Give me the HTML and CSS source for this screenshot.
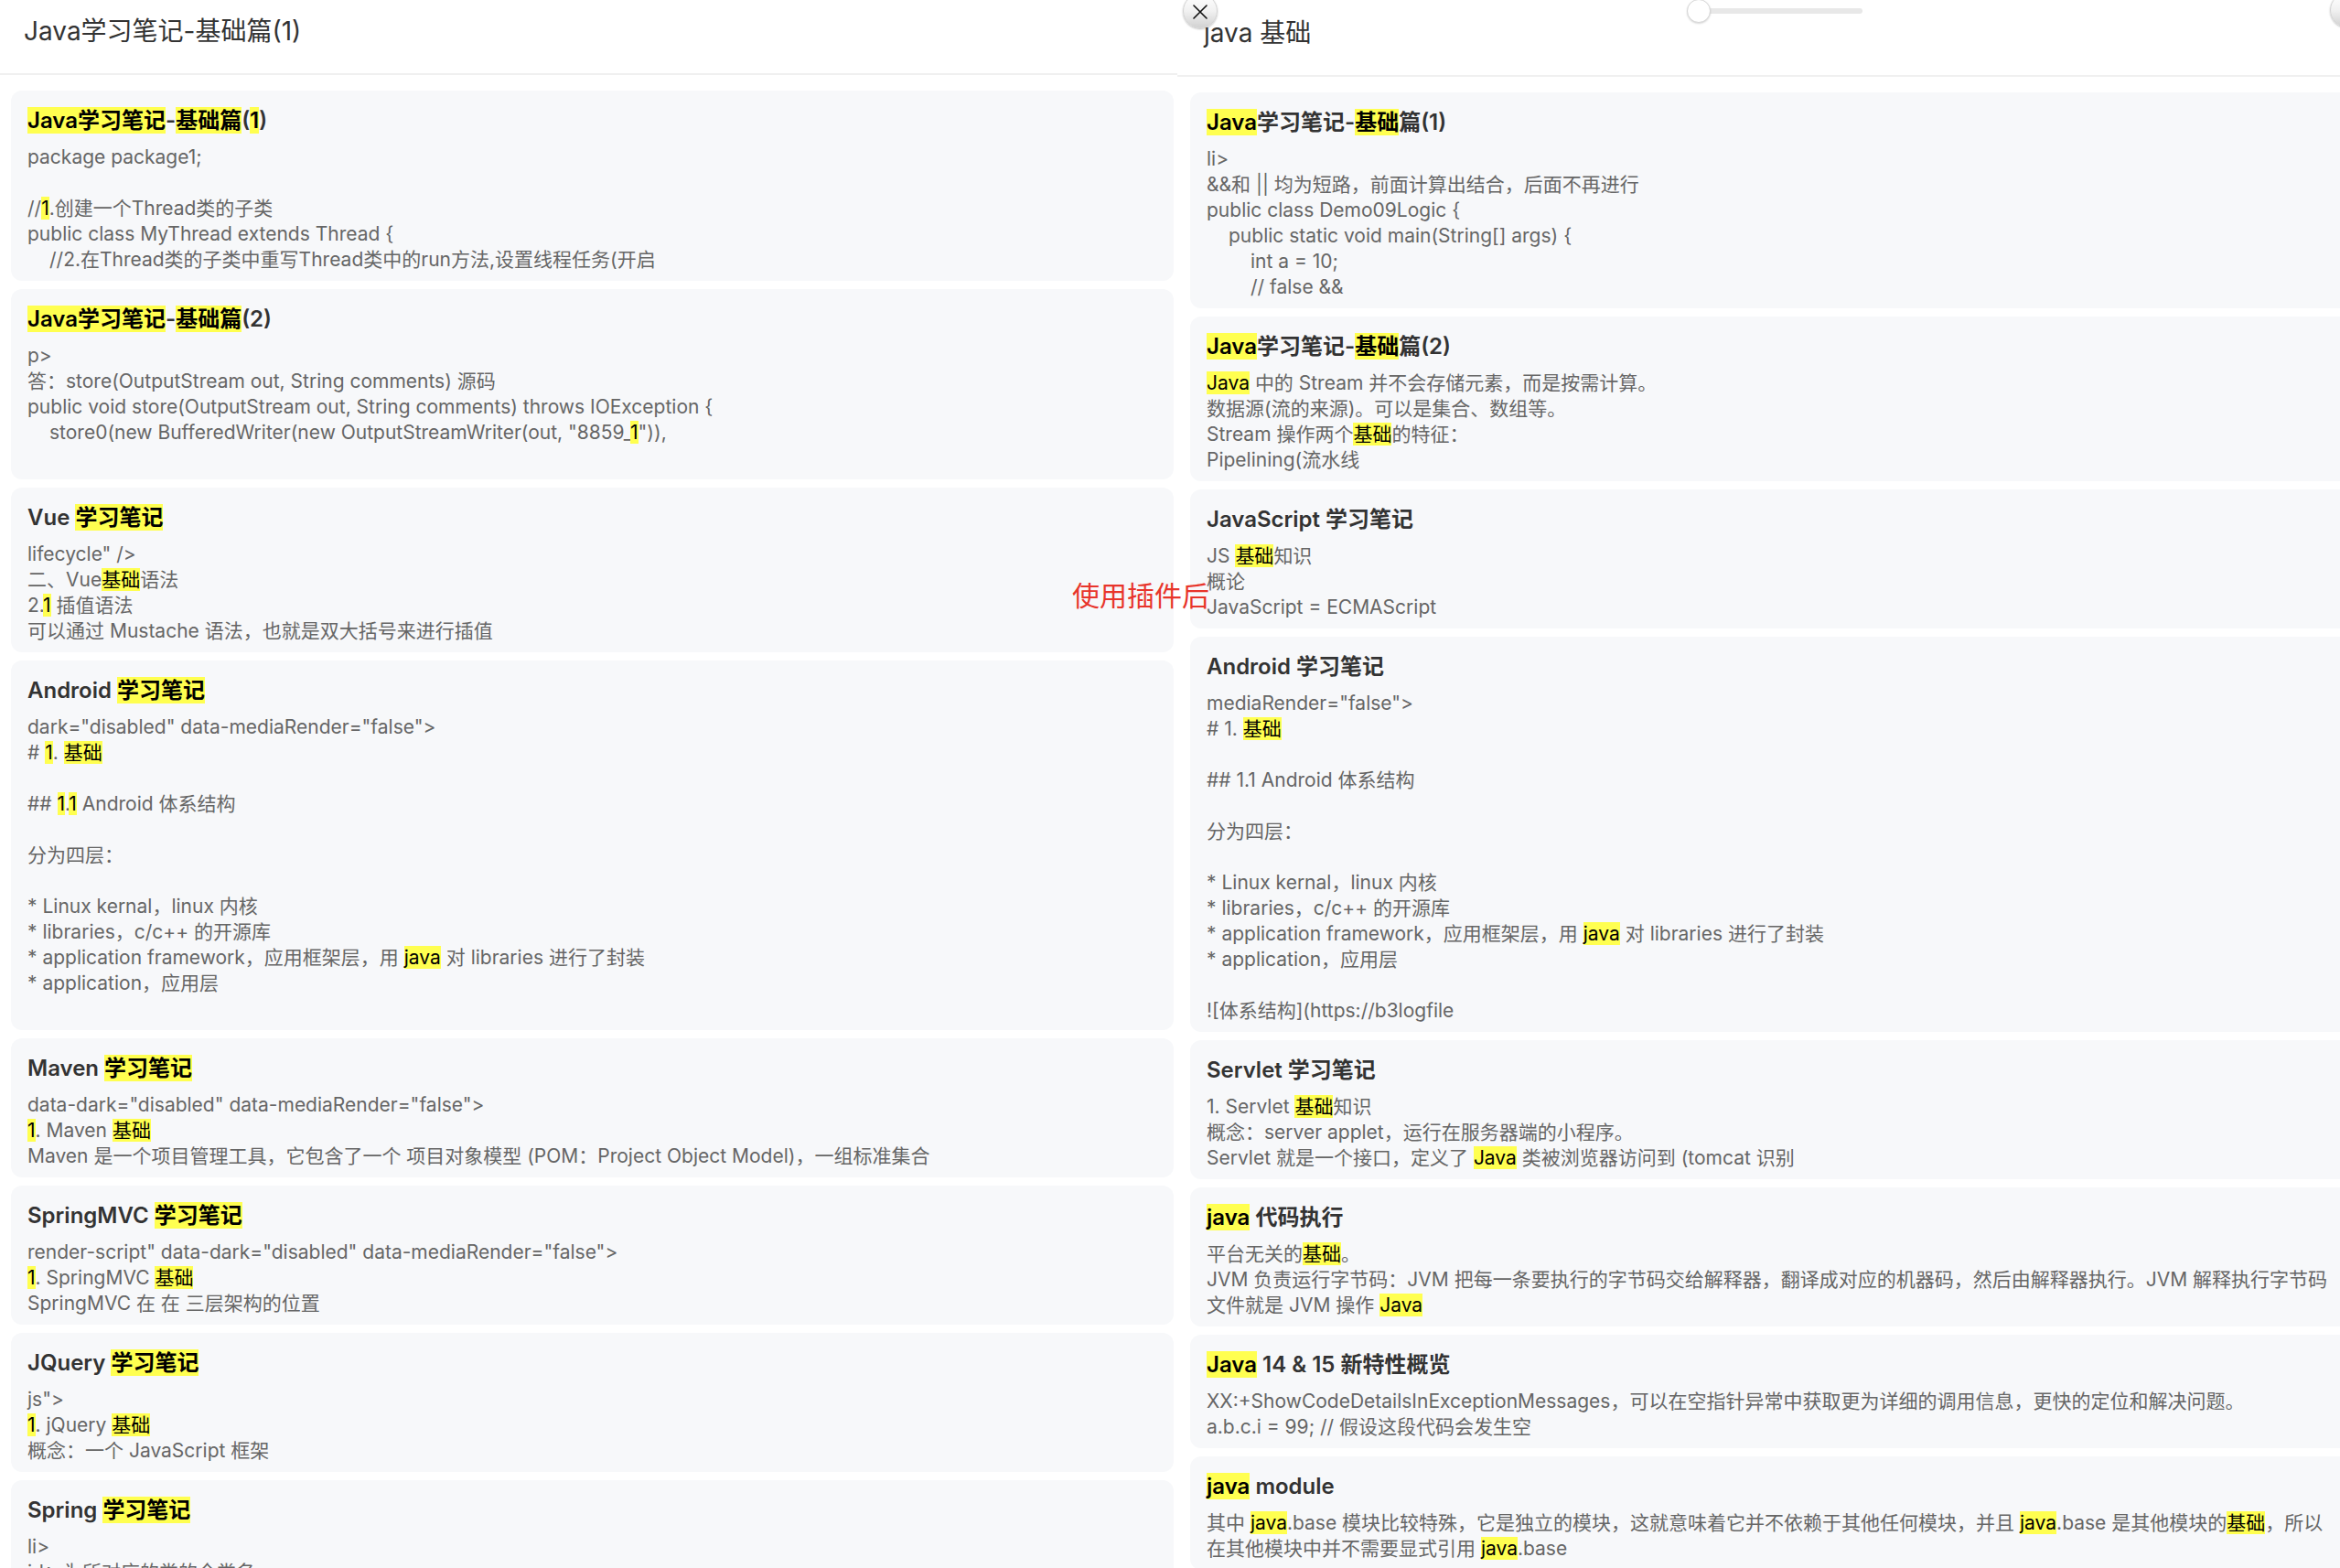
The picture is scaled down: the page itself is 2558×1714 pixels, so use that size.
FILE: index.html
```html
<!DOCTYPE html>
<html lang="zh-CN">
<head>
<meta charset="utf-8">
<title>Java学习笔记-基础篇(1)</title>
<link rel="stylesheet" href="styles.css">
</head>
<body>
<div class="app">
  <section class="panel panel-left">
    <header class="panel-head">Java学习笔记-基础篇(1)</header>
    <div class="list">
      <article class="card">
        <h3 class="card-title"><mark>Java学习笔记</mark>-<mark>基础篇</mark>(<mark>1</mark>)</h3>
        <div class="card-body">
          <p class="ln">package package1;</p>
          <p class="ln"></p>
          <p class="ln">//<mark>1</mark>.创建一个Thread类的子类</p>
          <p class="ln">public class MyThread extends Thread {</p>
          <p class="ln in1">//2.在Thread类的子类中重写Thread类中的run方法,设置线程任务(开启</p>
        </div>
      </article>
      <article class="card">
        <h3 class="card-title"><mark>Java学习笔记</mark>-<mark>基础篇</mark>(2)</h3>
        <div class="card-body">
          <p class="ln">p&gt;</p>
          <p class="ln">答：store(OutputStream out, String comments) 源码</p>
          <p class="ln">public void store(OutputStream out, String comments) throws IOException {</p>
          <p class="ln in1">store0(new BufferedWriter(new OutputStreamWriter(out, "8859_<mark>1</mark>")),</p>
          <p class="ln"></p>
        </div>
      </article>
      <article class="card">
        <h3 class="card-title">Vue <mark>学习笔记</mark></h3>
        <div class="card-body">
          <p class="ln">lifecycle" /&gt;</p>
          <p class="ln">二、Vue<mark>基础</mark>语法</p>
          <p class="ln">2.<mark>1</mark> 插值语法</p>
          <p class="ln">可以通过 Mustache 语法，也就是双大括号来进行插值</p>
        </div>
      </article>
      <article class="card">
        <h3 class="card-title">Android <mark>学习笔记</mark></h3>
        <div class="card-body">
          <p class="ln">dark="disabled" data-mediaRender="false"&gt;</p>
          <p class="ln"># <mark>1</mark>. <mark>基础</mark></p>
          <p class="ln"></p>
          <p class="ln">## <mark>1</mark>.<mark>1</mark> Android 体系结构</p>
          <p class="ln"></p>
          <p class="ln">分为四层：</p>
          <p class="ln"></p>
          <p class="ln">* Linux kernal，linux 内核</p>
          <p class="ln">* libraries，c/c++ 的开源库</p>
          <p class="ln">* application framework，应用框架层，用 <mark>java</mark> 对 libraries 进行了封装</p>
          <p class="ln">* application，应用层</p>
          <p class="ln"></p>
        </div>
      </article>
      <article class="card">
        <h3 class="card-title">Maven <mark>学习笔记</mark></h3>
        <div class="card-body">
          <p class="ln">data-dark="disabled" data-mediaRender="false"&gt;</p>
          <p class="ln"><mark>1</mark>. Maven <mark>基础</mark></p>
          <p class="ln">Maven 是一个项目管理工具，它包含了一个 项目对象模型 (POM：Project Object Model)，一组标准集合</p>
        </div>
      </article>
      <article class="card">
        <h3 class="card-title">SpringMVC <mark>学习笔记</mark></h3>
        <div class="card-body">
          <p class="ln">render-script" data-dark="disabled" data-mediaRender="false"&gt;</p>
          <p class="ln"><mark>1</mark>. SpringMVC <mark>基础</mark></p>
          <p class="ln">SpringMVC 在 在 三层架构的位置</p>
        </div>
      </article>
      <article class="card">
        <h3 class="card-title">JQuery <mark>学习笔记</mark></h3>
        <div class="card-body">
          <p class="ln">js"&gt;</p>
          <p class="ln"><mark>1</mark>. jQuery <mark>基础</mark></p>
          <p class="ln">概念：一个 JavaScript 框架</p>
        </div>
      </article>
      <article class="card">
        <h3 class="card-title">Spring <mark>学习笔记</mark></h3>
        <div class="card-body">
          <p class="ln">li&gt;</p>
          <p class="ln">id：为所对应的类的全类名</p>
          <p class="ln"></p>
        </div>
      </article>
    </div>
  </section>

  <section class="panel panel-right">
    <header class="panel-head panel-head-right">java 基础</header>
    <div class="list list-right">
      <article class="card">
        <h3 class="card-title"><mark>Java</mark>学习笔记-<mark>基础</mark>篇(1)</h3>
        <div class="card-body">
          <p class="ln">li&gt;</p>
          <p class="ln">&amp;&amp;和 || 均为短路，前面计算出结合，后面不再进行</p>
          <p class="ln">public class Demo09Logic {</p>
          <p class="ln in1">public static void main(String[] args) {</p>
          <p class="ln in2">int a = 10;</p>
          <p class="ln in2">// false &amp;&amp;</p>
        </div>
      </article>
      <article class="card">
        <h3 class="card-title"><mark>Java</mark>学习笔记-<mark>基础</mark>篇(2)</h3>
        <div class="card-body">
          <p class="ln"><mark>Java</mark> 中的 Stream 并不会存储元素，而是按需计算。</p>
          <p class="ln">数据源(流的来源)。可以是集合、数组等。</p>
          <p class="ln">Stream 操作两个<mark>基础</mark>的特征：</p>
          <p class="ln">Pipelining(流水线</p>
        </div>
      </article>
      <article class="card">
        <h3 class="card-title">JavaScript 学习笔记</h3>
        <div class="card-body">
          <p class="ln">JS <mark>基础</mark>知识</p>
          <p class="ln">概论</p>
          <p class="ln">JavaScript = ECMAScript</p>
        </div>
      </article>
      <article class="card">
        <h3 class="card-title">Android 学习笔记</h3>
        <div class="card-body">
          <p class="ln">mediaRender="false"&gt;</p>
          <p class="ln"># 1. <mark>基础</mark></p>
          <p class="ln"></p>
          <p class="ln">## 1.1 Android 体系结构</p>
          <p class="ln"></p>
          <p class="ln">分为四层：</p>
          <p class="ln"></p>
          <p class="ln">* Linux kernal，linux 内核</p>
          <p class="ln">* libraries，c/c++ 的开源库</p>
          <p class="ln">* application framework，应用框架层，用 <mark>java</mark> 对 libraries 进行了封装</p>
          <p class="ln">* application，应用层</p>
          <p class="ln"></p>
          <p class="ln">![体系结构](https://b3logfile</p>
        </div>
      </article>
      <article class="card">
        <h3 class="card-title">Servlet 学习笔记</h3>
        <div class="card-body">
          <p class="ln">1. Servlet <mark>基础</mark>知识</p>
          <p class="ln">概念：server applet，运行在服务器端的小程序。</p>
          <p class="ln">Servlet 就是一个接口，定义了 <mark>Java</mark> 类被浏览器访问到 (tomcat 识别</p>
        </div>
      </article>
      <article class="card">
        <h3 class="card-title"><mark>java</mark> 代码执行</h3>
        <div class="card-body">
          <p class="ln">平台无关的<mark>基础</mark>。</p>
          <p class="ln">JVM 负责运行字节码：JVM 把每一条要执行的字节码交给解释器，翻译成对应的机器码，然后由解释器执行。JVM 解释执行字节码文件就是 JVM 操作 <mark>Java</mark></p>
        </div>
      </article>
      <article class="card">
        <h3 class="card-title"><mark>Java</mark> 14 &amp; 15 新特性概览</h3>
        <div class="card-body">
          <p class="ln">XX:+ShowCodeDetailsInExceptionMessages，可以在空指针异常中获取更为详细的调用信息，更快的定位和解决问题。</p>
          <p class="ln">a.b.c.i = 99; // 假设这段代码会发生空</p>
        </div>
      </article>
      <article class="card">
        <h3 class="card-title"><mark>java</mark> module</h3>
        <div class="card-body">
          <p class="ln">其中 <mark>java</mark>.base 模块比较特殊，它是独立的模块，这就意味着它并不依赖于其他任何模块，并且 <mark>java</mark>.base 是其他模块的<mark>基础</mark>，所以在其他模块中并不需要显式引用 <mark>java</mark>.base</p>
        </div>
      </article>
    </div>
  </section>
</div>

<div class="caption">使用插件后</div>

<button class="close-btn" type="button" aria-label="关闭">
  <svg viewBox="0 0 16 16" width="16" height="16"><path d="M1 1 L15 15 M15 1 L1 15" stroke="#111" stroke-width="1.6" stroke-linecap="round" fill="none"/></svg>
</button>

<div class="slider"><span class="slider-track"></span><span class="slider-thumb"></span></div>

<span class="edge-btn"></span>
</body>
</html>
```

FILE: styles.css
```css
html, body {
  margin: 0;
  height: 100%;
  overflow: hidden;
  background: #ffffff;
}

body {
  position: relative;
  font-family: "Inter", "Noto Sans CJK SC", sans-serif;
  color: #333333;
}

.app {
  display: flex;
  align-items: flex-start;
  width: 2600px;
}

.panel {
  flex: none;
  background: #ffffff;
}

.panel-left {
  width: 1287px;
}

.panel-right {
  width: 1292px;
  padding-top: 2px;
}

.panel-head {
  box-sizing: border-box;
  height: 82px;
  padding: 14px 0 0 26px;
  font-size: 28px;
  line-height: 40px;
  color: #333333;
  border-bottom: 2px solid #f0f0f0;
}

.panel-head-right {
  padding-left: 29px;
}

.list {
  display: flex;
  flex-direction: column;
  gap: 9px;
  padding: 17px 4px 0 12px;
}

.list-right {
  padding: 17px 0 0 14px;
}

.card {
  background: #f7f8fa;
  border-radius: 12px;
  padding: 16px 18px 9px;
}

.list-right .card {
  width: 1234px;
}

.card-title {
  margin: 0 0 9px;
  font-size: 24px;
  line-height: 34px;
  font-weight: 600;
  color: #333333;
  white-space: nowrap;
}

.card-body {
  font-size: 21px;
  line-height: 28px;
  color: #666666;
}

.ln {
  margin: 0;
  min-height: 28px;
}

.in1 {
  padding-left: 24px;
}

.in2 {
  padding-left: 48px;
}

mark {
  background: #ffff50;
  color: #000000;
}

.caption {
  position: absolute;
  left: 1172px;
  top: 636px;
  font-size: 30px;
  line-height: 30px;
  color: #e8352b;
  white-space: nowrap;
}

.close-btn {
  position: absolute;
  left: 1293px;
  top: -7px;
  width: 38px;
  height: 38px;
  padding: 0 0 9px;
  border: 1px solid #d4d4d4;
  border-radius: 50%;
  background: linear-gradient(#ffffff 0%, #f1f1f1 50%, #d2d2d2 100%);
  box-shadow: 0 1px 2px rgba(0, 0, 0, 0.25);
  display: flex;
  align-items: flex-end;
  justify-content: center;
  box-sizing: border-box;
}

.slider {
  position: absolute;
  left: 1844px;
  top: -1px;
  width: 192px;
  height: 26px;
}

.slider-track {
  position: absolute;
  left: 22px;
  right: 0;
  top: 10px;
  height: 6px;
  border-radius: 3px;
  background: #e8e8e8;
}

.slider-thumb {
  position: absolute;
  left: 0;
  top: 0;
  width: 26px;
  height: 26px;
  box-sizing: border-box;
  border-radius: 50%;
  background: #ffffff;
  border: 1px solid #d6d6d6;
  box-shadow: 0 1px 2px rgba(0, 0, 0, 0.15);
}

.edge-btn {
  position: absolute;
  left: 2547px;
  top: -8px;
  width: 38px;
  height: 38px;
  box-sizing: border-box;
  border-radius: 50%;
  border: 1px solid #d4d4d4;
  background: linear-gradient(#ffffff 0%, #f1f1f1 50%, #d2d2d2 100%);
  box-shadow: 0 1px 2px rgba(0, 0, 0, 0.25);
}
```
